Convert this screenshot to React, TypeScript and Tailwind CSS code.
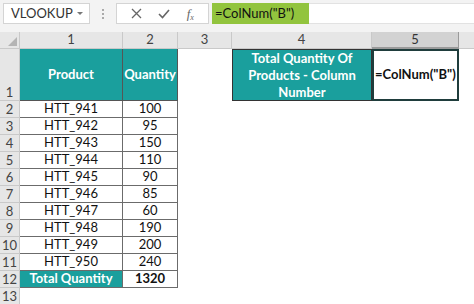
import React from 'react';

const rows = [
  ['HTT_941', '100'],
  ['HTT_942', '95'],
  ['HTT_943', '150'],
  ['HTT_944', '110'],
  ['HTT_945', '90'],
  ['HTT_946', '85'],
  ['HTT_947', '60'],
  ['HTT_948', '190'],
  ['HTT_949', '200'],
  ['HTT_950', '240'],
];

const font = { fontFamily: 'Lato, "Open Sans", "Liberation Sans", sans-serif' };

const RowHead = ({ n, tall }: { n: number; tall?: boolean }) => (
  <div
    className={`flex justify-center border-b border-r border-[#c9c9c9] bg-[#e6e6e6] text-[13px] leading-none text-[#444] ${
      tall ? 'h-[52px] items-end pb-[1px]' : 'h-[17px] items-center'
    }`}
  >
    {n}
  </div>
);

const Cell = ({
  children,
  className = '',
}: {
  children?: React.ReactNode;
  className?: string;
}) => (
  <div
    className={`flex h-[17px] items-center justify-center border-b border-r border-[#6b6b6b] text-[13px] text-[#111] ${className}`}
  >
    {children}
  </div>
);

const App = () => {
  return (
    <div className="w-[474px] h-[304px] overflow-hidden bg-white" style={font}>
      {/* formula bar */}
      <div className="flex h-[32px] items-start bg-[#f3f3f3] pt-[3px]">
        <div className="ml-[3px] flex h-[21px] w-[87px] items-center justify-between border border-[#d4d4d4] bg-white pl-[7px] pr-[6px] text-[13px] text-[#333]">
          <span>VLOOKUP</span>
          <span className="h-0 w-0 border-x-[3px] border-t-[3px] border-x-transparent border-t-[#777]" />
        </div>
        <div className="flex h-[21px] w-[26px] flex-col items-center justify-center gap-[2px]">
          <span className="h-[2px] w-[2px] bg-[#aaa]" />
          <span className="h-[2px] w-[2px] bg-[#aaa]" />
          <span className="h-[2px] w-[2px] bg-[#aaa]" />
        </div>
        <div className="flex h-[21px] w-[93px] items-center justify-around border border-[#d4d4d4] bg-white px-[6px] text-[#666]">
          <svg width="11" height="11" viewBox="0 0 11 11">
            <path d="M1 1L10 10M10 1L1 10" stroke="#666" strokeWidth="1.3" />
          </svg>
          <svg width="12" height="10" viewBox="0 0 12 10">
            <path d="M1 5L4.5 8.5L11 1" stroke="#666" strokeWidth="1.6" fill="none" />
          </svg>
          <span
            className="text-[13px] italic text-[#666]"
            style={{ fontFamily: '"Liberation Serif", serif' }}
          >
            f<sub className="text-[8px]">x</sub>
          </span>
        </div>
        <div className="ml-[3px] flex h-[21px] w-[97px] items-center bg-[#92c43e] pl-[3px] text-[13px] text-[#111]">
          =ColNum("B")
        </div>
        <div className="h-[21px] flex-1 border-y border-[#e2e2e2] bg-white" />
      </div>

      {/* sheet */}
      <div className="grid grid-cols-[20px_103px_55px_54px_140px_87px_1fr]">
        {/* column headers */}
        <div className="relative h-[17px] border-b border-r border-[#c9c9c9] bg-[#e6e6e6]">
          <span className="absolute bottom-[2px] right-[2px] h-0 w-0 border-b-[9px] border-l-[9px] border-b-[#b4b4b4] border-l-transparent" />
        </div>
        {['1', '2', '3', '4'].map((c) => (
          <div
            key={c}
            className="flex h-[17px] items-center justify-center border-b border-r border-[#c9c9c9] bg-[#e6e6e6] text-[13px] text-[#444]"
          >
            {c}
          </div>
        ))}
        <div className="flex h-[17px] items-center justify-center border-b-2 border-r border-[#9a9a9a] bg-[#d2d2d2] text-[13px] text-[#333]">
          5
        </div>
        <div className="h-[17px] border-b border-[#c9c9c9] bg-[#e6e6e6]" />

        {/* row 1 */}
        <RowHead n={1} tall />
        <div className="flex h-[52px] items-center justify-center border-b border-r border-[#555] bg-[#1a9f9d] text-[13px] font-bold text-white">
          Product
        </div>
        <div className="flex h-[52px] items-center justify-center border-b border-r border-[#555] bg-[#1a9f9d] text-[13px] font-bold text-white">
          Quantity
        </div>
        <div className="h-[52px]" />
        <div className="flex h-[52px] items-center justify-center border border-[#333] bg-[#1a9f9d] text-center text-[13px] font-bold leading-[17px] text-white">
          Total Quantity Of
          <br />
          Products - Column
          <br />
          Number
        </div>
        <div className="flex h-[52px] items-center border-2 border-[#1f3d3c] bg-white pl-[1px] text-[13px] font-bold text-[#111]">
          =ColNum("B")
        </div>
        <div className="h-[52px]" />

        {/* data rows */}
        {rows.map(([p, q], i) => (
          <React.Fragment key={p}>
            <RowHead n={i + 2} />
            <Cell>{p}</Cell>
            <Cell>{q}</Cell>
            <div />
            <div />
            <div />
            <div />
          </React.Fragment>
        ))}

        {/* total row */}
        <RowHead n={12} />
        <Cell className="bg-[#1a9f9d] font-bold text-white">Total Quantity</Cell>
        <Cell className="font-bold">1320</Cell>
        <div />
        <div />
        <div />
        <div />

        <RowHead n={13} />
        <div />
        <div />
        <div />
        <div />
        <div />
        <div />
      </div>
    </div>
  );
};

export default App;
